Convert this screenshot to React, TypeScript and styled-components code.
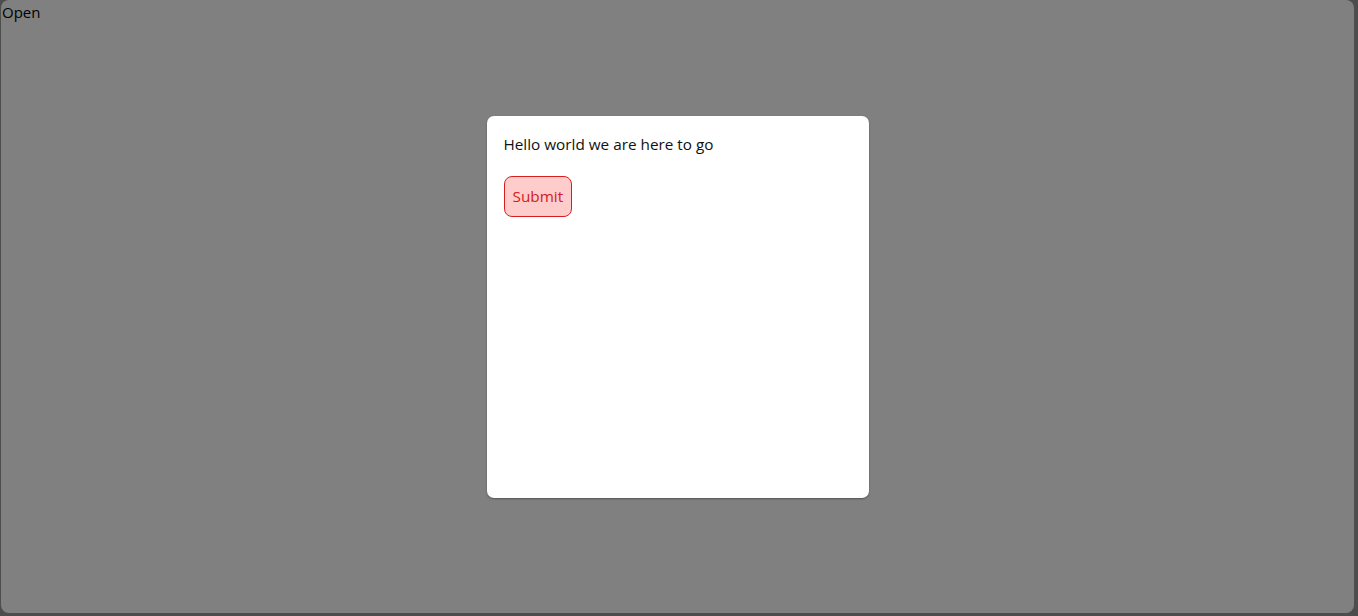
import React from "react";
import styled, { createGlobalStyle } from "styled-components";

const Global = createGlobalStyle`
  html, body {
    margin: 0;
    padding: 0;
    background: #4d4d4d;
    overflow: hidden;
  }
  body {
    font-family: "Open Sans", "Noto Sans", sans-serif;
  }
`;

const Overlay = styled.div`
  width: 1353px;
  height: 613px;
  margin-left: 1px;
  border-radius: 8px;
  background: #808080;
  display: grid;
  grid-template: 1fr / 1fr;
`;

const OpenButton = styled.button`
  grid-area: 1 / 1;
  align-self: start;
  justify-self: start;
  margin: 2px 0 0 1px;
  padding: 0;
  border: none;
  background: none;
  color: #000;
  font-family: "Open Sans", sans-serif;
  font-size: 15px;
  line-height: 20px;
  cursor: pointer;
`;

const Modal = styled.div`
  grid-area: 1 / 1;
  place-self: center;
  width: 382px;
  height: 382px;
  box-sizing: border-box;
  background: #ffffff;
  border-radius: 7px;
  box-shadow: 0 1px 2px rgba(0, 0, 0, 0.35);
  padding: 17px 17px;
  display: flex;
  flex-direction: column;
  align-items: flex-start;
  gap: 21px;
`;

const Message = styled.p`
  margin: 0;
  font-size: 15.3px;
  line-height: 22px;
  color: #111;
`;

const SubmitButton = styled.button`
  box-sizing: border-box;
  height: 41px;
  padding: 0 8px;
  border: 1px solid #d81f1f;
  border-radius: 8px;
  background: #ffcccc;
  color: #cf2020;
  font-family: "Open Sans", sans-serif;
  font-size: 15.3px;
  cursor: pointer;
`;

export default function App() {
  return (
    <>
      <Global />
      <Overlay>
        <OpenButton>Open</OpenButton>
        <Modal>
          <Message>Hello world we are here to go</Message>
          <SubmitButton>Submit</SubmitButton>
        </Modal>
      </Overlay>
    </>
  );
}
